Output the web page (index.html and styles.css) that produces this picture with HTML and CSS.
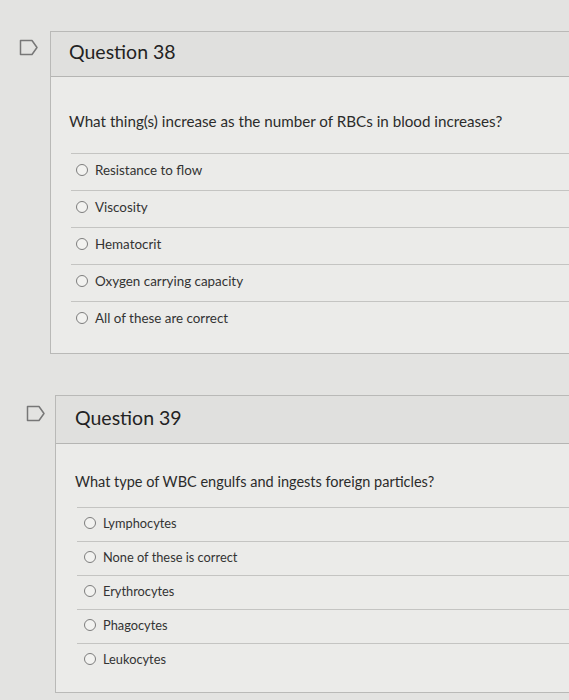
FILE: index.html
```html
<!DOCTYPE html>
<html>
<head>
<meta charset="utf-8">
<link rel="stylesheet" href="styles.css">
</head>
<body>
<div class="page">
  <div class="q-row q-first">
    <div class="flag">
      <svg width="20" height="17" viewBox="0 0 20 17"><path d="M1.5 1.5 H13 L18 8.5 L13 15.5 H1.5 Z" fill="none" stroke="#777" stroke-width="1.5" stroke-linejoin="round"/></svg>
    </div>
    <div class="card">
      <div class="card-head">Question 38</div>
      <div class="card-body">
        <div class="q-text">What thing(s) increase as the number of RBCs in blood increases?</div>
        <div class="answers">
          <div class="answer"><span class="radio"></span><span>Resistance to flow</span></div>
          <div class="answer"><span class="radio"></span><span>Viscosity</span></div>
          <div class="answer"><span class="radio"></span><span>Hematocrit</span></div>
          <div class="answer"><span class="radio"></span><span>Oxygen carrying capacity</span></div>
          <div class="answer"><span class="radio"></span><span>All of these are correct</span></div>
        </div>
      </div>
    </div>
  </div>
  <div class="q-row q-second">
    <div class="flag">
      <svg width="20" height="17" viewBox="0 0 20 17"><path d="M1.5 1.5 H13 L18 8.5 L13 15.5 H1.5 Z" fill="none" stroke="#777" stroke-width="1.5" stroke-linejoin="round"/></svg>
    </div>
    <div class="card">
      <div class="card-head">Question 39</div>
      <div class="card-body">
        <div class="q-text">What type of WBC engulfs and ingests foreign particles?</div>
        <div class="answers">
          <div class="answer"><span class="radio"></span><span>Lymphocytes</span></div>
          <div class="answer"><span class="radio"></span><span>None of these is correct</span></div>
          <div class="answer"><span class="radio"></span><span>Erythrocytes</span></div>
          <div class="answer"><span class="radio"></span><span>Phagocytes</span></div>
          <div class="answer"><span class="radio"></span><span>Leukocytes</span></div>
        </div>
      </div>
    </div>
  </div>
</div>
</body>
</html>
```
FILE: styles.css
```css
html, body {
  margin: 0;
  padding: 0;
  background: #e3e3e1;
  overflow: hidden;
}
body {
  font-family: Lato, "Open Sans", sans-serif;
  color: #2b2b2b;
  width: 569px;
  height: 700px;
}
.page {
  padding-top: 31px;
  display: flex;
  flex-direction: column;
  gap: 41px;
}
.q-row {
  display: flex;
  align-items: flex-start;
}
.flag {
  flex: 0 0 auto;
  display: flex;
  justify-content: flex-start;
}
.q-first { padding-left: 19px; --row: 37px; --head: 45px; --indent: 18px; }
.q-first .flag { width: 31px; padding-top: 8px; }
.q-second { padding-left: 26px; --row: 34px; --head: 48px; --indent: 19px; }
.q-second .flag { width: 29px; padding-top: 10px; }

.card {
  flex: 0 0 560px;
  border: 1px solid #b9b9b7;
  border-right: none;
  background: #ebebe9;
}
.card-head {
  height: var(--head);
  box-sizing: border-box;
  background: #e0e0de;
  border-bottom: 1px solid #b5b5b3;
  padding-left: var(--indent);
  padding-bottom: 5px;
  display: flex;
  align-items: center;
  font-size: 19.5px;
  color: #232323;
}
.card-body {
  padding-left: var(--indent);
  padding-bottom: 15px;
}
.q-text {
  font-size: 15.2px;
  line-height: 19px;
  padding-top: 35px;
  padding-bottom: 22px;
}
.q-second .q-text { font-size: 14.5px; padding-top: 28px; padding-bottom: 16px; }
.answers {
  margin-left: 2px;
}
.answer {
  height: var(--row);
  box-sizing: border-box;
  border-top: 1px solid #c4c4c2;
  display: flex;
  align-items: center;
  gap: 7px;
  padding-left: 5px;
  padding-bottom: 4px;
  font-size: 13.4px;
  color: #333;
}
.q-second .answer { font-size: 12.8px; padding-left: 7px; }
.radio {
  width: 10px;
  height: 10px;
  border: 1.3px solid #7d7d7d;
  border-radius: 50%;
  background: #f2f2f0;
  flex: 0 0 auto;
}
```
